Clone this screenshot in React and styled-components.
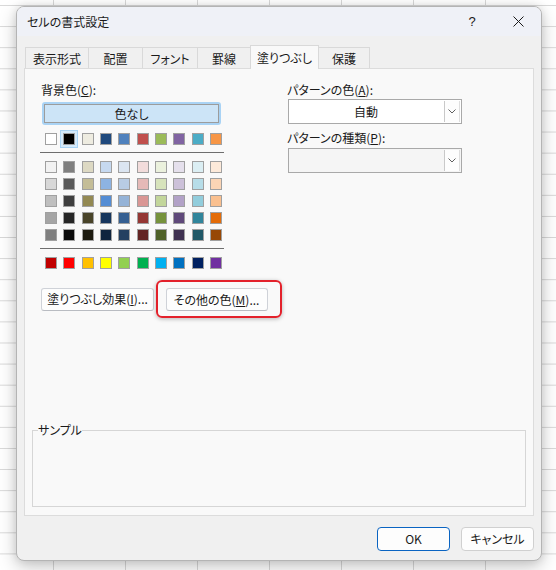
import React from 'react';
import styled, { createGlobalStyle } from 'styled-components';

const FONT = `"Noto Sans CJK JP", "Noto Sans", sans-serif`;

const GlobalStyle = createGlobalStyle`
  html, body { margin: 0; padding: 0; }
  body {
    width: 556px;
    height: 570px;
    overflow: hidden;
    background-color: #ffffff;
    background-image:
      linear-gradient(to right, #d8d8d8 1px, transparent 1px),
      linear-gradient(to bottom, #d8d8d8 1px, transparent 1px);
    background-size: 72px 21.1px;
    background-position: 53px 5px;
    font-family: ${FONT};
  }
`;

const THEME = ['#FFFFFF', '#000000', '#EEECE1', '#1F497D', '#4F81BD', '#C0504D', '#9BBB59', '#8064A2', '#4BACC6', '#F79646'];
const TINTS = [
  ['#F2F2F2', '#7F7F7F', '#DDD9C3', '#C6D9F0', '#DBE5F1', '#F2DCDB', '#EBF1DD', '#E5E0EC', '#DBEEF3', '#FDEADA'],
  ['#D8D8D8', '#595959', '#C4BD97', '#8DB3E2', '#B8CCE4', '#E5B9B7', '#D7E3BC', '#CCC1D9', '#B7DDE8', '#FBD5B5'],
  ['#BFBFBF', '#3F3F3F', '#938953', '#548DD4', '#95B3D7', '#D99694', '#C3D69B', '#B2A2C7', '#92CDDC', '#FAC08F'],
  ['#A5A5A5', '#262626', '#494429', '#17365D', '#366092', '#953734', '#76923C', '#5F497A', '#31859B', '#E36C09'],
  ['#7F7F7F', '#0C0C0C', '#1D1B10', '#0F243E', '#244061', '#632423', '#4F6128', '#3F3151', '#205867', '#974806'],
];
const STANDARD = ['#C00000', '#FF0000', '#FFC000', '#FFFF00', '#92D050', '#00B050', '#00B0F0', '#0070C0', '#002060', '#7030A0'];

const TABS = [
  { label: '表示形式', w: 64 },
  { label: '配置', w: 55 },
  { label: 'フォント', w: 56 },
  { label: '罫線', w: 54 },
  { label: '塗りつぶし', w: 69, active: true },
  { label: '保護', w: 52 },
];

const Desktop = styled.div`
  padding: 6px 0 0 16px;
`;

const Dialog = styled.div`
  width: 526px;
  height: 555px;
  box-sizing: border-box;
  border: 1px solid #b4b4b4;
  border-radius: 8px;
  background: #f0f0f0;
  box-shadow: 0 6px 18px rgba(0, 0, 0, 0.22), 0 0 8px rgba(0, 0, 0, 0.1);
  display: flex;
  flex-direction: column;
  overflow: hidden;
  font-family: ${FONT};
  font-size: 12px;
  color: #1a1a1a;
  font-feature-settings: "palt";
`;

const TitleBar = styled.div`
  flex: none;
  height: 29px;
  display: flex;
  align-items: center;
  background: #eff1f7;
  padding-left: 10px;
`;

const Title = styled.div`
  flex: 1;
  line-height: 16px;
  padding-top: 1px;
`;

const TitleButton = styled.div`
  width: 46px;
  height: 29px;
  display: flex;
  align-items: center;
  justify-content: center;
  font-family: "Liberation Sans", sans-serif;
  font-size: 13px;
  color: #1a1a1a;
`;

const Body = styled.div`
  flex: 1;
  display: flex;
  flex-direction: column;
  padding: 9px 7px 9px 7px;
`;

const TabStrip = styled.div`
  height: 24px;
  display: flex;
  align-items: flex-end;
  padding-left: 1px;
  position: relative;
  z-index: 1;
`;

const Tab = styled.div`
  width: ${(p) => p.$w}px;
  height: ${(p) => (p.$active ? 24 : 21)}px;
  margin-bottom: ${(p) => (p.$active ? 0 : 1)}px;
  margin-left: -1px;
  box-sizing: border-box;
  border: 1px solid #d9d9d9;
  border-bottom: none;
  background: ${(p) => (p.$active ? '#f9f9f9' : '#f0f0f0')};
  display: flex;
  align-items: center;
  justify-content: center;
  padding-top: ${(p) => (p.$active ? 0 : 1)}px;
  &:first-child { margin-left: 0; }
`;

const Panel = styled.div`
  margin-top: -1px;
  height: 448px;
  box-sizing: border-box;
  border: 1px solid #dcdcdc;
  background: #f9f9f9;
  display: flex;
  flex-direction: column;
`;

const TopRow = styled.div`
  display: flex;
  padding: 13px 0 0 15px;
`;

const LeftColumn = styled.div`
  width: 184px;
  display: flex;
  flex-direction: column;
`;

const RightColumn = styled.div`
  margin-left: 63px;
  width: 175px;
  display: flex;
  flex-direction: column;
`;

const FieldLabel = styled.div`
  line-height: 16px;
  height: 16px;
  white-space: nowrap;
  margin-left: ${(p) => p.$indent || 0}px;
  margin-top: ${(p) => p.$top || 0}px;
`;

const NoColorButton = styled.div`
  margin: 4px 0 0 2px;
  width: 179px;
  height: 23px;
  box-sizing: border-box;
  border: 2px solid #a9d3f5;
  border-radius: 3px;
  display: flex;
`;

const NoColorInner = styled.div`
  flex: 1;
  border: 1px solid #9c9c9c;
  background: #cce4f7;
  display: flex;
  align-items: center;
  justify-content: center;
  line-height: 16px;
`;

const SwatchRow = styled.div`
  width: 177px;
  margin-left: 5px;
  margin-top: ${(p) => p.$top || 0}px;
  display: flex;
  justify-content: space-between;
`;

const SwatchGrid = styled.div`
  margin-top: 8px;
  display: flex;
  flex-direction: column;
  gap: 5px;
`;

const Swatch = styled.div`
  width: 12px;
  height: 12px;
  box-sizing: border-box;
  border: 1px solid #a0a0a0;
  background: ${(p) => p.$color};
  box-shadow: ${(p) => (p.$selected ? '0 0 0 2px #d3eafc, 0 0 0 3px #a8d2f3' : 'none')};
`;

const Separator = styled.div`
  height: 1px;
  background: #6e6e6e;
  margin-top: ${(p) => p.$top || 0}px;
`;

const Dropdown = styled.div`
  margin: ${(p) => p.$top || 0}px 0 0 1px;
  width: 174px;
  height: 25px;
  box-sizing: border-box;
  border: 1px solid #a9a9a9;
  background: ${(p) => (p.$disabled ? '#f5f5f5' : '#ffffff')};
  display: flex;
`;

const DropdownValue = styled.div`
  flex: 1;
  display: flex;
  align-items: center;
  justify-content: center;
  line-height: 16px;
`;

const ArrowBox = styled.div`
  width: 16px;
  margin: 1px;
  box-sizing: border-box;
  border-left: 1px solid #c9c9c9;
  border-right: 1px solid #dedede;
  background: #fdfdfd;
  display: flex;
  align-items: center;
  justify-content: center;
`;

const ButtonsRow = styled.div`
  margin-top: 11px;
  padding-left: 16px;
  display: flex;
  align-items: center;
`;

const PushButton = styled.div`
  width: ${(p) => p.$w}px;
  height: 23px;
  box-sizing: border-box;
  border: 1px solid #cfd2d8;
  border-bottom-color: #b9bcc2;
  border-radius: 3px;
  background: #fdfdfd;
  display: flex;
  align-items: center;
  justify-content: center;
  line-height: 16px;
  white-space: nowrap;
`;

const Highlight = styled.div`
  margin-left: 1.5px;
  padding: 6px 12px 5px 8px;
  border: 2px solid #e3212b;
  border-radius: 6px;
  box-shadow: 0 1px 4px rgba(0, 0, 0, 0.28);
`;

const SampleGroup = styled.fieldset`
  margin: auto 7px 8px 7px;
  height: 85px;
  box-sizing: border-box;
  padding: 0;
  border: 1px solid #d6d6d6;
  min-width: 0;
`;

const SampleLegend = styled.legend`
  margin-left: 5px;
  padding: 0;
  line-height: 16px;
  font-size: 12px;
`;

const Footer = styled.div`
  margin-top: 11px;
  display: flex;
  justify-content: flex-end;
  gap: 11px;
`;

const DialogButton = styled.div`
  width: 73px;
  height: 24px;
  box-sizing: border-box;
  border: 1px solid ${(p) => (p.$primary ? '#0a64c2' : '#d0d0d0')};
  border-radius: 4px;
  background: #fdfdfd;
  display: flex;
  align-items: center;
  justify-content: center;
  line-height: 16px;
`;

const Chevron = () => (
  <svg width="8" height="5" viewBox="0 0 8 5">
    <path d="M0.5 0.5 L4 4 L7.5 0.5" fill="none" stroke="#606060" strokeWidth="1" />
  </svg>
);

const CloseIcon = () => (
  <svg width="11" height="11" viewBox="0 0 11 11">
    <path d="M0.5 0.5 L10.5 10.5 M10.5 0.5 L0.5 10.5" stroke="#1a1a1a" strokeWidth="1" fill="none" />
  </svg>
);

export default function App() {
  return (
    <>
      <GlobalStyle />
      <Desktop>
        <Dialog>
          <TitleBar>
            <Title>セルの書式設定</Title>
            <TitleButton>?</TitleButton>
            <TitleButton>
              <CloseIcon />
            </TitleButton>
          </TitleBar>
          <Body>
            <TabStrip>
              {TABS.map((t) => (
                <Tab key={t.label} $w={t.w} $active={t.active}>
                  {t.label}
                </Tab>
              ))}
            </TabStrip>
            <Panel>
              <TopRow>
                <LeftColumn>
                  <FieldLabel $indent={1}>
                    背景色(<u>C</u>):
                  </FieldLabel>
                  <NoColorButton>
                    <NoColorInner>色なし</NoColorInner>
                  </NoColorButton>
                  <SwatchRow $top={8}>
                    {THEME.map((c, i) => (
                      <Swatch key={c} $color={c} $selected={i === 1} />
                    ))}
                  </SwatchRow>
                  <Separator $top={7} />
                  <SwatchGrid>
                    {TINTS.map((row, r) => (
                      <SwatchRow key={r}>
                        {row.map((c, i) => (
                          <Swatch key={i} $color={c} />
                        ))}
                      </SwatchRow>
                    ))}
                  </SwatchGrid>
                  <Separator $top={7} />
                  <SwatchRow $top={8}>
                    {STANDARD.map((c) => (
                      <Swatch key={c} $color={c} />
                    ))}
                  </SwatchRow>
                </LeftColumn>
                <RightColumn>
                  <FieldLabel>
                    パターンの色(<u>A</u>):
                  </FieldLabel>
                  <Dropdown $top={1}>
                    <DropdownValue>自動</DropdownValue>
                    <ArrowBox>
                      <Chevron />
                    </ArrowBox>
                  </Dropdown>
                  <FieldLabel $top={6}>
                    パターンの種類(<u>P</u>):
                  </FieldLabel>
                  <Dropdown $top={2} $disabled>
                    <DropdownValue />
                    <ArrowBox>
                      <Chevron />
                    </ArrowBox>
                  </Dropdown>
                </RightColumn>
              </TopRow>
              <ButtonsRow>
                <PushButton $w={113}>
                  塗りつぶし効果(<u>I</u>)...
                </PushButton>
                <Highlight>
                  <PushButton $w={102}>
                    その他の色(<u>M</u>)...
                  </PushButton>
                </Highlight>
              </ButtonsRow>
              <SampleGroup>
                <SampleLegend>サンプル</SampleLegend>
              </SampleGroup>
            </Panel>
            <Footer>
              <DialogButton $primary>OK</DialogButton>
              <DialogButton>キャンセル</DialogButton>
            </Footer>
          </Body>
        </Dialog>
      </Desktop>
    </>
  );
}
